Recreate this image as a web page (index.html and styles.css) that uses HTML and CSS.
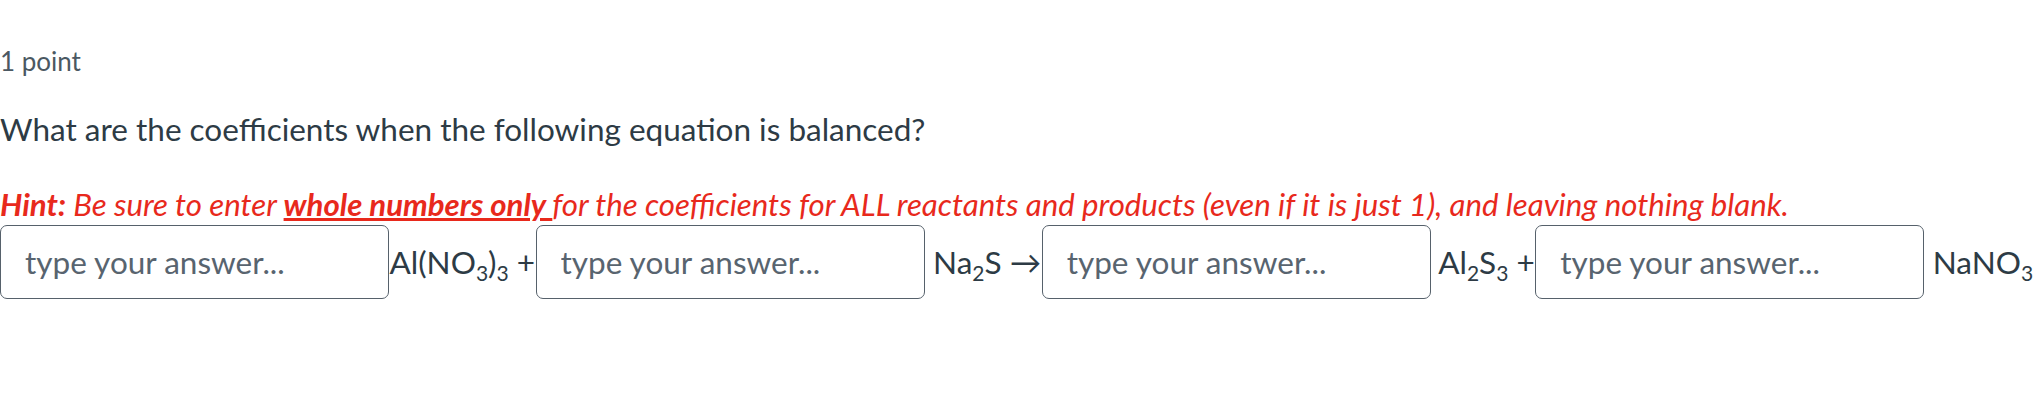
FILE: index.html
```html
<!DOCTYPE html>
<html lang="en">
<head>
<meta charset="utf-8">
<title>Quiz question</title>
<link rel="stylesheet" href="styles.css">
</head>
<body>
<div class="question">
  <div class="points">1 point</div>
  <p class="prompt">What are the coefficients when the following equation is balanced?</p>
  <p class="hint"><strong>Hint:</strong> Be sure to enter <strong class="u">whole numbers only </strong>for the coefficients for ALL reactants and products (even if it is just 1), and leaving nothing blank.</p>
  <div class="equation">
    <input class="answer" type="text" placeholder="type your answer...">
    <span class="chem">Al(NO<sub>3</sub>)<sub>3</sub> +</span>
    <input class="answer" type="text" placeholder="type your answer...">
    <span class="chem">&nbsp;Na<sub>2</sub>S →</span>
    <input class="answer" type="text" placeholder="type your answer...">
    <span class="chem">&nbsp;Al<sub>2</sub>S<sub>3</sub> +</span>
    <input class="answer" type="text" placeholder="type your answer...">
    <span class="chem">&nbsp;NaNO<sub>3</sub></span>
  </div>
</div>
</body>
</html>
```

FILE: styles.css
```css
html, body {
  margin: 0;
  padding: 0;
  background: #ffffff;
}

body {
  font-family: Lato, "Noto Sans", sans-serif;
  color: #2d3b45;
}

.question {
  padding-top: 43px;
}

.points {
  font-size: 26px;
  line-height: 36px;
  color: #4b5862;
}

.prompt {
  margin: 28px 0 0 0;
  font-size: 31.5px;
  line-height: 44px;
}

.hint {
  margin: 34px 0 0 0;
  font-size: 31.2px;
  line-height: 38px;
  font-style: italic;
  color: #e8291c;
}

.hint strong {
  font-weight: 700;
}

.hint .u {
  text-decoration: underline;
  text-decoration-thickness: 3px;
}

.equation {
  display: flex;
  align-items: center;
  margin-top: 2px;
}

.answer {
  box-sizing: border-box;
  width: 389px;
  height: 74px;
  margin: 0;
  padding: 0 24px;
  border: 1.75px solid #56616b;
  border-radius: 7px;
  background: #ffffff;
  font-family: Lato, "Noto Sans", sans-serif;
  font-size: 31.5px;
  color: #2d3b45;
  outline: none;
}

.answer::placeholder {
  color: #58646f;
  opacity: 1;
}

.chem {
  font-size: 31.5px;
  line-height: 44px;
  white-space: nowrap;
  padding: 0 0.5px;
}

.chem sub {
  font-size: 21px;
  vertical-align: -7px;
  line-height: 0;
}
```
